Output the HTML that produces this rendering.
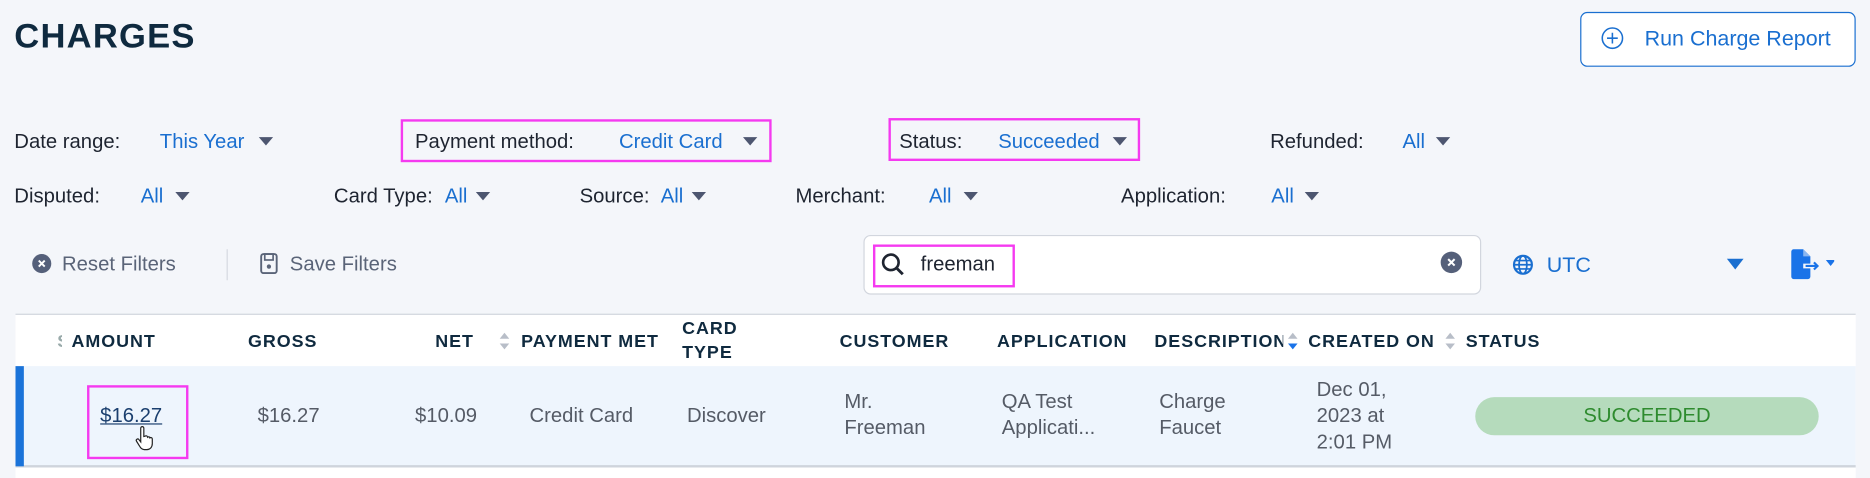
<!DOCTYPE html>
<html><head><meta charset="utf-8"><style>
html,body{margin:0;padding:0;background:#f4f6fa;overflow:hidden;}
#w{position:absolute;left:0;top:0;width:1568px;height:400px;transform:scale(1.19260);transform-origin:0 0;font-family:"Liberation Sans",sans-serif;}
.a{position:absolute;white-space:nowrap;}
.l{font-size:17px;color:#1e2430;}
.b{font-size:17px;color:#1a6fd0;}
.tri{position:absolute;width:0;height:0;border-left:6px solid transparent;border-right:6px solid transparent;border-top:7px solid #4d5670;}
.mag{position:absolute;border:2px solid #f53af0;box-sizing:border-box;}
.h{font-size:15px;font-weight:bold;color:#0f2a3f;letter-spacing:0.8px;}
.d{font-size:17px;color:#555b66;line-height:22px;}
</style></head><body><div id="w">
<div class="a" style="left:12px;top:15px;font-size:29px;font-weight:bold;color:#0f2a3f;letter-spacing:1px">CHARGES</div>
<div class="a" style="left:1325px;top:10px;width:231px;height:46px;box-sizing:border-box;background:#fff;border:1px solid #1a6fd0;border-radius:6px"></div>
<svg class="a" style="left:1342px;top:22px" width="20" height="20"><circle cx="10" cy="10" r="8.5" fill="none" stroke="#1a6fd0" stroke-width="1.3"/><path d="M10 5.5v9M5.5 10h9" stroke="#1a6fd0" stroke-width="1.3"/></svg>
<div class="a" style="left:1379px;top:22px;font-size:18px;color:#1a6fd0">Run Charge Report</div>

<div class="a l" style="left:12px;top:109px">Date range:</div>
<div class="a b" style="left:134px;top:109px">This Year</div><div class="tri" style="left:217px;top:115px"></div>
<div class="mag" style="left:336px;top:100px;width:311px;height:36px"></div>
<div class="a l" style="left:348px;top:109px">Payment method:</div>
<div class="a b" style="left:519px;top:109px">Credit Card</div><div class="tri" style="left:623px;top:115px"></div>
<div class="mag" style="left:745px;top:99px;width:211px;height:36px"></div>
<div class="a l" style="left:754px;top:109px">Status:</div>
<div class="a b" style="left:837px;top:109px">Succeeded</div><div class="tri" style="left:933px;top:115px"></div>
<div class="a l" style="left:1065px;top:109px">Refunded:</div>
<div class="a b" style="left:1176px;top:109px">All</div><div class="tri" style="left:1204px;top:115px"></div>

<div class="a l" style="left:12px;top:155px">Disputed:</div>
<div class="a b" style="left:118px;top:155px">All</div><div class="tri" style="left:147px;top:161px"></div>
<div class="a l" style="left:280px;top:155px">Card Type:</div>
<div class="a b" style="left:373px;top:155px">All</div><div class="tri" style="left:399px;top:161px"></div>
<div class="a l" style="left:486px;top:155px">Source:</div>
<div class="a b" style="left:554px;top:155px">All</div><div class="tri" style="left:580px;top:161px"></div>
<div class="a l" style="left:667px;top:155px">Merchant:</div>
<div class="a b" style="left:779px;top:155px">All</div><div class="tri" style="left:808px;top:161px"></div>
<div class="a l" style="left:940px;top:155px">Application:</div>
<div class="a b" style="left:1066px;top:155px">All</div><div class="tri" style="left:1094px;top:161px"></div>

<svg class="a" style="left:26px;top:212px" width="18" height="18"><circle cx="9" cy="9" r="8" fill="#55607a"/><path d="M6.5 6.5l5 5M11.5 6.5l-5 5" stroke="#fff" stroke-width="1.6"/></svg>
<div class="a" style="left:52px;top:212px;font-size:17px;color:#5a6478">Reset Filters</div>
<div class="a" style="left:190px;top:209px;width:1px;height:26px;background:#d5d9e0"></div>
<svg class="a" style="left:218px;top:212px" width="16" height="18"><rect x="1" y="1" width="13" height="16" rx="2" fill="none" stroke="#5a6478" stroke-width="1.6"/><rect x="4" y="1" width="7" height="5" fill="none" stroke="#5a6478" stroke-width="1.4"/><circle cx="7.5" cy="11.5" r="1.8" fill="#5a6478"/></svg>
<div class="a" style="left:243px;top:212px;font-size:17px;color:#5a6478">Save Filters</div>

<div class="a" style="left:724px;top:197px;width:518px;height:50px;box-sizing:border-box;background:#fff;border:1px solid #d2d6de;border-radius:6px"></div>
<div class="mag" style="left:732px;top:205px;width:119px;height:36px"></div>
<svg class="a" style="left:738px;top:211px" width="22" height="22"><circle cx="9" cy="9" r="6.5" fill="none" stroke="#1e2430" stroke-width="2.2"/><path d="M13.5 13.5l5.5 5.5" stroke="#1e2430" stroke-width="2.4"/></svg>
<div class="a" style="left:772px;top:212px;font-size:17px;color:#1e2430">freeman</div>
<svg class="a" style="left:1207px;top:210px" width="20" height="20"><circle cx="10" cy="10" r="9" fill="#55607a"/><path d="M7.3 7.3l5.4 5.4M12.7 7.3l-5.4 5.4" stroke="#fff" stroke-width="1.7"/></svg>
<svg class="a" style="left:1268px;top:213px" width="18" height="18"><circle cx="9" cy="9" r="7.5" fill="none" stroke="#1a6fd0" stroke-width="1.8"/><ellipse cx="9" cy="9" rx="3.3" ry="7.5" fill="none" stroke="#1a6fd0" stroke-width="1.5"/><path d="M1.5 9h15M2.5 5.5h13M2.5 12.5h13" stroke="#1a6fd0" stroke-width="1.4"/></svg>
<div class="a" style="left:1297px;top:212px;font-size:18px;color:#1a6fd0">UTC</div>
<div class="tri" style="left:1448px;top:217px;border-top-color:#1a6fd0;border-left-width:7px;border-right-width:7px;border-top-width:9px"></div>
<svg class="a" style="left:1500px;top:208px" width="38" height="28"><path d="M2 3a2 2 0 0 1 2-2h8l6 6v6h-6v4h6v7a2 2 0 0 1-2 2H4a2 2 0 0 1-2-2z" fill="#1a73e8"/><path d="M12 1v6h6" fill="#8ab6f0"/><path d="M14 15h10M21 12l3 3-3 3" stroke="#1a73e8" stroke-width="1.8" fill="none"/><path d="M31 10h8l-4 5z" fill="#1a73e8"/></svg>

<div class="a" style="left:13px;top:263px;width:1543px;height:137px;background:#fff;border-top:1px solid #cfd4dc"></div>
<div class="a h" style="left:48px;top:278px;width:4px;overflow:hidden;color:#9aa">S</div>
<div class="a h" style="left:60px;top:278px">AMOUNT</div>
<div class="a h" style="left:208px;top:278px">GROSS</div>
<div class="a h" style="left:365px;top:278px">NET</div>
<svg class="a" style="left:418px;top:277px" width="10" height="18"><path d="M1 7l4-5 4 5zM1 11l4 5 4-5z" fill="#b8bec8"/></svg>
<div class="a h" style="left:437px;top:278px;width:116px;overflow:hidden">PAYMENT METHOD</div>
<div class="a h" style="left:572px;top:266px;line-height:20px">CARD<br>TYPE</div>
<div class="a h" style="left:704px;top:278px">CUSTOMER</div>
<div class="a h" style="left:836px;top:278px;width:112px;overflow:hidden">APPLICATION</div>
<div class="a h" style="left:968px;top:278px;width:108px;overflow:hidden">DESCRIPTION</div>
<svg class="a" style="left:1079px;top:277px" width="10" height="18"><path d="M1 7l4-5 4 5z" fill="#b8bec8"/><path d="M1 11l4 5 4-5z" fill="#1a73e8"/></svg>
<div class="a h" style="left:1097px;top:278px">CREATED ON</div>
<svg class="a" style="left:1211px;top:277px" width="10" height="18"><path d="M1 7l4-5 4 5zM1 11l4 5 4-5z" fill="#b8bec8"/></svg>
<div class="a h" style="left:1229px;top:278px">STATUS</div>

<div class="a" style="left:13px;top:307px;width:1543px;height:83px;background:#eef5fd;border-bottom:2px solid #cfd4dc"></div>
<div class="a" style="left:13px;top:307px;width:7px;height:84px;background:#1a73d9"></div>
<div class="mag" style="left:73px;top:323px;width:85px;height:62px"></div>
<div class="a d" style="left:84px;top:338px;color:#1b3f6e;text-decoration:underline">$16.27</div>
<svg class="a" style="left:113px;top:357px" width="16" height="22"><path d="M5 2a1.3 1.3 0 0 1 2.6 0v7l1-.2a1.2 1.2 0 0 1 2 .4l.1.4a1.2 1.2 0 0 1 2 .6 1.2 1.2 0 0 1 2 .8V15c0 3-2 5-4.5 5H8c-2 0-3-1-4-3L1.5 13a1.2 1.2 0 0 1 2-1.4L5 13.5z" fill="#fff" stroke="#222" stroke-width="1"/></svg>
<div class="a d" style="left:216px;top:338px">$16.27</div>
<div class="a d" style="left:348px;top:338px">$10.09</div>
<div class="a d" style="left:444px;top:338px">Credit Card</div>
<div class="a d" style="left:576px;top:338px">Discover</div>
<div class="a d" style="left:708px;top:326px">Mr.<br>Freeman</div>
<div class="a d" style="left:840px;top:326px">QA Test<br>Applicati...</div>
<div class="a d" style="left:972px;top:326px">Charge<br>Faucet</div>
<div class="a d" style="left:1104px;top:316px">Dec 01,<br>2023 at<br>2:01 PM</div>
<div class="a" style="left:1237px;top:333px;width:288px;height:32px;border-radius:16px;background:#b5dbbc;color:#2e8b2e;font-size:17px;text-align:center;line-height:32px">SUCCEEDED</div>
</div></body></html>
